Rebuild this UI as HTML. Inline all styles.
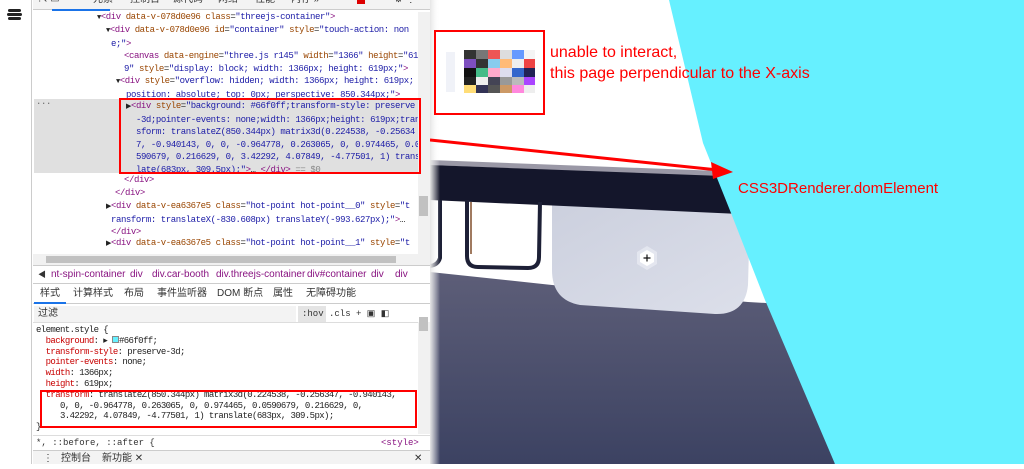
<!DOCTYPE html>
<html><head><meta charset="utf-8"><style>
*{margin:0;padding:0;box-sizing:border-box}
body{width:1024px;height:464px;overflow:hidden;position:relative;background:#fff;font-family:"Liberation Sans","Noto Sans CJK SC",sans-serif}
.a{position:absolute;white-space:nowrap}
.m{font-family:"Liberation Mono",monospace;font-size:9px;line-height:12px;color:#222}
.e .m{letter-spacing:-0.42px}
.t{color:#881280}.n{color:#994500}.v{color:#1a1aa6}.p{color:#c80000}
.s .m{letter-spacing:-0.6px}
</style></head><body>
<svg class="a" style="left:430px;top:0" width="594" height="464" viewBox="430 0 594 464">
<defs><linearGradient id="g" x1="0" y1="0" x2="0" y2="1"><stop offset="0" stop-color="#5d5e78"/><stop offset="1" stop-color="#3c4262"/></linearGradient>
<linearGradient id="c" x1="0" y1="0" x2="1" y2="1"><stop offset="0" stop-color="#ccd0de"/><stop offset="1" stop-color="#dcdfea"/></linearGradient>
<linearGradient id="l" x1="0" x2="1"><stop offset="0" stop-color="#e6e6e6"/><stop offset="1" stop-color="#fff" stop-opacity="0"/></linearGradient></defs>
<rect x="430" y="0" width="594" height="464" fill="#fff"/>
<polygon points="430,272 552,285 748,302 800,305 835,464 430,464" fill="url(#g)"/>
<path d="M552,205 L750,213 L748,285 Q745,315 715,314 L580,305 Q552,300 552,270 Z" fill="url(#c)"/>
<polygon points="430,160 720,171 727,177 430,165" fill="#9a98a6"/>
<polygon points="430,165 722,176 740,214 430,200" fill="#14162b"/>
<path d="M440,200 L440,258 Q438,265 430,266" stroke="#1d2036" stroke-width="4" fill="none"/>
<path d="M467,200 L467,256 Q467,267 478,267 L528,268 Q539,268 539,257 L540,202" stroke="#1d2036" stroke-width="4" fill="none"/>
<path d="M471,202 L471,254" stroke="#a07a60" stroke-width="2"/>
<rect x="430" y="0" width="10" height="464" fill="url(#l)"/>
<polygon points="669,0 1024,0 1024,464 835,464 765,300 731,213 703,143" fill="#66f0ff"/>
<polygon points="647,246 657,252 657,264 647,270 637,264 637,252" fill="#eef0f6" opacity=".6"/>
<polygon points="647,250 654,254 654,262 647,266 640,262 640,254" fill="#fff"/>
<path d="M643.5,258h7M647,254.5v7" stroke="#111" stroke-width="1.2"/>
<line x1="430" y1="140" x2="718" y2="170" stroke="#f00" stroke-width="3"/>
<polygon points="733,172 711,162 713,179" fill="#f00"/>
<rect x="435" y="31" width="109" height="83" fill="#fff" stroke="#f00" stroke-width="2"/>
<g>
<rect x="464" y="50" width="12" height="9" fill="#333"/><rect x="476" y="50" width="12" height="9" fill="#777"/><rect x="488" y="50" width="12" height="9" fill="#e55"/><rect x="500" y="50" width="12" height="9" fill="#ddd"/><rect x="512" y="50" width="12" height="9" fill="#69f"/><rect x="524" y="50" width="11" height="9" fill="#f4f4f4"/>
<rect x="464" y="59" width="12" height="9" fill="#7d4fbf"/><rect x="476" y="59" width="12" height="9" fill="#333"/><rect x="488" y="59" width="12" height="9" fill="#8ce"/><rect x="500" y="59" width="12" height="9" fill="#fb7"/><rect x="512" y="59" width="12" height="9" fill="#eee"/><rect x="524" y="59" width="11" height="9" fill="#e44"/>
<rect x="464" y="68" width="12" height="9" fill="#111"/><rect x="476" y="68" width="12" height="9" fill="#4b8"/><rect x="488" y="68" width="12" height="9" fill="#fac"/><rect x="500" y="68" width="12" height="9" fill="#dde"/><rect x="512" y="68" width="12" height="9" fill="#36c"/><rect x="524" y="68" width="11" height="9" fill="#225"/>
<rect x="464" y="77" width="12" height="8" fill="#222"/><rect x="476" y="77" width="12" height="8" fill="#eee"/><rect x="488" y="77" width="12" height="8" fill="#445"/><rect x="500" y="77" width="12" height="8" fill="#999"/><rect x="512" y="77" width="12" height="8" fill="#bbb"/><rect x="524" y="77" width="11" height="8" fill="#a4f"/>
<rect x="464" y="85" width="12" height="8" fill="#fd7"/><rect x="476" y="85" width="12" height="8" fill="#335"/><rect x="488" y="85" width="12" height="8" fill="#555"/><rect x="500" y="85" width="12" height="8" fill="#c96"/><rect x="512" y="85" width="12" height="8" fill="#f8d"/><rect x="524" y="85" width="11" height="8" fill="#eee"/>
<rect x="446" y="52" width="9" height="40" fill="#f0f2f8"/>
</g>
</svg>
<div class="a" style="left:550px;top:42px;color:#f00;font-size:16px;line-height:21px">unable to interact,<br>this page perpendicular to the X-axis</div>
<div class="a" style="left:738px;top:180px;color:#f00;font-size:15px">CSS3DRenderer.domElement</div>

<div class="a" style="left:0;top:0;width:32px;height:464px;background:#fff;border-right:1px solid #ccc"></div>
<div class="a" style="left:8px;top:9px;width:13px;height:3px;background:#222;border-radius:2px"></div>
<div class="a" style="left:7px;top:13px;width:15px;height:3px;background:#222;border-radius:2px"></div>
<div class="a" style="left:8px;top:17px;width:13px;height:3px;background:#222;border-radius:2px"></div>

<div class="a" style="left:33px;top:0;width:397px;height:464px;background:#fff"></div>
<div class="a" style="left:33px;top:0;width:397px;height:10px;background:#f3f3f3;border-bottom:1px solid #ccc;font-size:10px;color:#333;line-height:4px;overflow:hidden">
<span class="a" style="left:6px;top:-2px">⇱ ▭</span><span class="a" style="left:60px;top:-2px">元素</span><span class="a" style="left:97px;top:-2px">控制台</span><span class="a" style="left:140px;top:-2px">源代码</span><span class="a" style="left:185px;top:-2px">网络</span><span class="a" style="left:222px;top:-2px">性能</span><span class="a" style="left:258px;top:-2px">内存 »</span>
<span class="a" style="left:324px;top:-2px;background:#d00;color:#fff;width:8px;height:6px"></span><span class="a" style="left:361px;top:-2px">⚙ ⋮</span></div>
<div class="a" style="left:52px;top:9px;width:58px;height:2px;background:#1a73e8"></div>
<div class="a" style="left:34px;top:99px;width:384px;height:74px;background:#e0e0e0"></div>
<div class="a" style="left:418px;top:12px;width:12px;height:242px;background:#f1f1f1"></div>
<div class="a" style="left:419px;top:196px;width:9px;height:20px;background:#c1c1c1"></div>
<div class="e" style="position:absolute;left:0;top:0;width:418px;height:254px;overflow:hidden">
<div class="a m" style="left:36px;top:98px;color:#666">···</div>
<div class="a m" style="left:97px;top:11px"><span style="font-size:7px">▼</span><span class="t">&lt;div</span> <span class="n">data-v-078d0e96</span> <span class="n">class</span>=<span class="v">"threejs-container"</span><span class="t">&gt;</span></div>
<div class="a m" style="left:106px;top:24px;line-height:12.6px"><span style="font-size:7px">▼</span><span class="t">&lt;div</span> <span class="n">data-v-078d0e96</span> <span class="n">id</span>=<span class="v">"container"</span> <span class="n">style</span>=<span class="v">"touch-action: non</span><br>&nbsp;<span class="v">e;"</span><span class="t">&gt;</span></div>
<div class="a m" style="left:124px;top:50px;line-height:12.6px"><span class="t">&lt;canvas</span> <span class="n">data-engine</span>=<span class="v">"three.js r145"</span> <span class="n">width</span>=<span class="v">"1366"</span> <span class="n">height</span>=<span class="v">"61</span><br><span class="v">9"</span> <span class="n">style</span>=<span class="v">"display: block; width: 1366px; height: 619px;"</span><span class="t">&gt;</span></div>
<div class="a m" style="left:116px;top:75px;line-height:12.6px"><span style="font-size:7px">▼</span><span class="t">&lt;div</span> <span class="n">style</span>=<span class="v">"overflow: hidden; width: 1366px; height: 619px;</span><br>&nbsp;&nbsp;<span class="v">position: absolute; top: 0px; perspective: 850.344px;"</span><span class="t">&gt;</span></div>
<div class="a m" style="left:126px;top:100px;line-height:12.5px"><span style="font-size:7px">▶</span><span class="t">&lt;div</span> <span class="n">style</span>=<span class="v">"background: #66f0ff;transform-style: preserve</span><br>&nbsp;&nbsp;<span class="v">-3d;pointer-events: none;width: 1366px;height: 619px;tran</span><br>&nbsp;&nbsp;<span class="v">sform: translateZ(850.344px) matrix3d(0.224538, -0.25634</span><br>&nbsp;&nbsp;<span class="v">7, -0.940143, 0, 0, -0.964778, 0.263065, 0, 0.974465, 0.0</span><br>&nbsp;&nbsp;<span class="v">590679, 0.216629, 0, 3.42292, 4.07849, -4.77501, 1) trans</span><br>&nbsp;&nbsp;<span class="v">late(683px, 309.5px);"</span><span class="t">&gt;</span>… <span class="t">&lt;/div&gt;</span> <span style="color:#888">== $0</span></div>
<div class="a m" style="left:124px;top:174px"><span class="t">&lt;/div&gt;</span></div>
<div class="a m" style="left:115px;top:187px"><span class="t">&lt;/div&gt;</span></div>
<div class="a m" style="left:106px;top:200px;line-height:12.6px"><span style="font-size:7px">▶</span><span class="t">&lt;div</span> <span class="n">data-v-ea6367e5</span> <span class="n">class</span>=<span class="v">"hot-point hot-point__0"</span> <span class="n">style</span>=<span class="v">"t</span><br>&nbsp;<span class="v">ransform: translateX(-830.608px) translateY(-993.627px);"</span><span class="t">&gt;</span>…<br>&nbsp;<span class="t">&lt;/div&gt;</span></div>
<div class="a m" style="left:106px;top:237px"><span style="font-size:7px">▶</span><span class="t">&lt;div</span> <span class="n">data-v-ea6367e5</span> <span class="n">class</span>=<span class="v">"hot-point hot-point__1"</span> <span class="n">style</span>=<span class="v">"t</span></div>
</div>
<div class="a" style="left:119px;top:98px;width:302px;height:76px;border:2px solid #f00"></div>
<div class="a" style="left:33px;top:254px;width:397px;height:11px;background:#f1f1f1"></div>
<div class="a" style="left:46px;top:256px;width:350px;height:7px;background:#c1c1c1"></div>
<div class="a" style="left:33px;top:265px;width:397px;height:19px;background:#fff;border-top:1px solid #ccc;border-bottom:1px solid #ccc;font-size:10px;line-height:17px;color:#881280">
<span class="a" style="left:5px;color:#333;font-size:8px">◀</span><span class="a" style="left:18px">nt-spin-container</span><span class="a" style="left:97px">div</span><span class="a" style="left:119px">div.car-booth</span><span class="a" style="left:183px">div.threejs-container</span><span class="a" style="left:274px">div#container</span><span class="a" style="left:338px">div</span><span class="a" style="left:362px">div</span></div>
<div class="a" style="left:33px;top:284px;width:397px;height:20px;background:#fff;border-bottom:1px solid #ccc;font-size:10px;line-height:20px;color:#333">
<span class="a" style="left:7px">样式</span><span class="a" style="left:40px">计算样式</span><span class="a" style="left:91px">布局</span><span class="a" style="left:124px">事件监听器</span><span class="a" style="left:184px">DOM 断点</span><span class="a" style="left:240px">属性</span><span class="a" style="left:273px">无障碍功能</span></div>
<div class="a" style="left:34px;top:302px;width:32px;height:2px;background:#1a73e8"></div>
<div class="a" style="left:34px;top:306px;width:262px;height:16px;background:#f3f3f3;font-size:10px;line-height:16px;color:#333;padding-left:4px">过滤</div>
<div class="a" style="left:298px;top:306px;width:28px;height:16px;background:#e4e4e4"></div>
<div class="a m" style="left:302px;top:308px;color:#333">:hov .cls +  ▣ ◧</div>
<div class="a" style="left:33px;top:322px;width:397px;height:1px;background:#ddd"></div>
<div class="s">
<div class="a m" style="left:36px;top:325px;line-height:10.8px">element.style {<br>&nbsp;&nbsp;<span class="p">background</span>: ▸ <span style="display:inline-block;width:7px;height:7px;background:#66f0ff;border:1px solid #888"></span>#66f0ff;<br>&nbsp;&nbsp;<span class="p">transform-style</span>: preserve-3d;<br>&nbsp;&nbsp;<span class="p">pointer-events</span>: none;<br>&nbsp;&nbsp;<span class="p">width</span>: 1366px;<br>&nbsp;&nbsp;<span class="p">height</span>: 619px;<br>&nbsp;&nbsp;<span class="p">transform</span>: translateZ(850.344px) matrix3d(0.224538, -0.256347, -0.940143,<br>&nbsp;&nbsp;&nbsp;&nbsp;&nbsp;0, 0, -0.964778, 0.263065, 0, 0.974465, 0.0590679, 0.216629, 0,<br>&nbsp;&nbsp;&nbsp;&nbsp;&nbsp;3.42292, 4.07849, -4.77501, 1) translate(683px, 309.5px);<br>}</div>
</div>
<div class="a" style="left:40px;top:390px;width:377px;height:38px;border:2px solid #f00"></div>
<div class="a" style="left:418px;top:322px;width:12px;height:112px;background:#f1f1f1"></div>
<div class="a" style="left:419px;top:317px;width:9px;height:14px;background:#c1c1c1"></div>
<div class="a" style="left:33px;top:435px;width:397px;height:1px;background:#ddd"></div>
<div class="a m" style="left:36px;top:437px;color:#333">*, ::before, ::after {</div>
<div class="a m" style="left:381px;top:437px;color:#881280">&lt;style&gt;</div>
<div class="a" style="left:33px;top:450px;width:397px;height:14px;background:#f3f3f3;border-top:1px solid #ccc;font-size:10px;line-height:20px;color:#333">
<span class="a" style="left:10px;top:-2px">⋮</span><span class="a" style="left:28px;top:-2px">控制台</span><span class="a" style="left:69px;top:-2px">新功能 ✕</span><span class="a" style="left:381px;top:-2px">✕</span></div>
</body></html>
